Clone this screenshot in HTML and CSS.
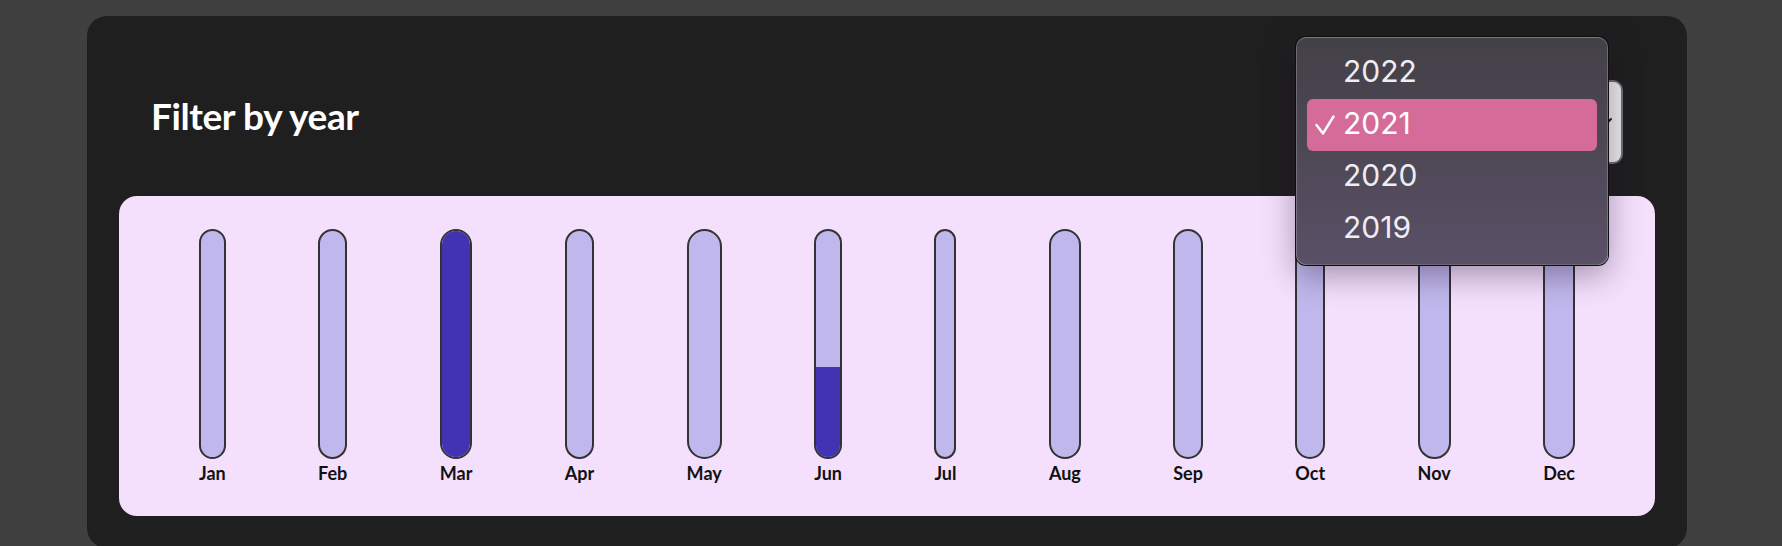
FILE: index.html
```html
<!DOCTYPE html>
<html lang="en">
<head>
<meta charset="utf-8">
<title>Filter by year</title>
<link rel="stylesheet" href="styles.css">
</head>
<body>
<div class="card">
  <div class="header">
    <h2 class="title">Filter by year</h2>
    <div class="select-wrap">
      <div class="select">
        <span class="select-value">2021</span>
        <svg class="chevron" width="16" height="10" viewBox="0 0 16 10"><polyline points="2,2 8,8 14,2" fill="none" stroke="#1a1a1a" stroke-width="2" stroke-linecap="round" stroke-linejoin="round"/></svg>
      </div>
      <div class="popup">
        <div class="option">2022</div>
        <div class="option selected">
          <svg class="check" width="20" height="20" viewBox="0 0 20 20"><polyline points="1.5,10 8,18.5 18.5,1.5" fill="none" stroke="#fff" stroke-width="2.4" stroke-linecap="round" stroke-linejoin="round"/></svg>
          2021
        </div>
        <div class="option">2020</div>
        <div class="option">2019</div>
      </div>
    </div>
  </div>
  <div class="panel">
    <div class="month"><div class="bar"><div class="fill" style="height:0%"></div></div><span class="label">Jan</span></div>
    <div class="month"><div class="bar"><div class="fill" style="height:0%"></div></div><span class="label">Feb</span></div>
    <div class="month"><div class="bar"><div class="fill" style="height:100%"></div></div><span class="label">Mar</span></div>
    <div class="month"><div class="bar"><div class="fill" style="height:0%"></div></div><span class="label">Apr</span></div>
    <div class="month"><div class="bar"><div class="fill" style="height:0%"></div></div><span class="label">May</span></div>
    <div class="month"><div class="bar"><div class="fill" style="height:40%"></div></div><span class="label">Jun</span></div>
    <div class="month"><div class="bar"><div class="fill" style="height:0%"></div></div><span class="label">Jul</span></div>
    <div class="month"><div class="bar"><div class="fill" style="height:0%"></div></div><span class="label">Aug</span></div>
    <div class="month"><div class="bar"><div class="fill" style="height:0%"></div></div><span class="label">Sep</span></div>
    <div class="month"><div class="bar"><div class="fill" style="height:0%"></div></div><span class="label">Oct</span></div>
    <div class="month"><div class="bar"><div class="fill" style="height:0%"></div></div><span class="label">Nov</span></div>
    <div class="month"><div class="bar"><div class="fill" style="height:0%"></div></div><span class="label">Dec</span></div>
  </div>
</div>
</body>
</html>
```
FILE: styles.css
```css
html, body {
  margin: 0;
  padding: 0;
  background: #404040;
  overflow: hidden;
}

body {
  padding-top: 16px;
  font-family: "Lato", "Noto Sans", sans-serif;
}

.card {
  margin-left: 87px;
  width: 1600px;
  box-sizing: border-box;
  background: #1f1f1f;
  border-radius: 20px;
  padding: 32px;
}

.header {
  display: flex;
  align-items: center;
  justify-content: space-between;
  padding: 32px 32px;
}

.title {
  margin: 0;
  padding-bottom: 14px;
  color: #ffffff;
  font-family: "Lato", sans-serif;
  font-weight: 700;
  font-size: 37px;
  letter-spacing: -0.4px;
}

.select-wrap {
  position: relative;
  width: 310px;
}

.select {
  height: 84px;
  box-sizing: border-box;
  background: #ebebeb;
  border: 2px solid #707070;
  border-radius: 10px;
  display: flex;
  align-items: center;
  justify-content: space-between;
  padding: 0 8px 0 30px;
  font-family: "Inter", sans-serif;
  font-size: 30px;
  color: #111;
}

.chevron {
  display: block;
}

.popup {
  position: absolute;
  left: -17px;
  top: -43px;
  width: 312px;
  box-sizing: border-box;
  padding: 9px 0 9px;
  border-radius: 10px;
  background: linear-gradient(180deg, #434148 0%, #4d4753 45%, #5a5067 100%);
  border: 1px solid rgba(255, 255, 255, 0.22);
  box-shadow: 0 0 0 1px #0e0e0e, 0 10px 32px rgba(30, 10, 45, 0.38);
  font-family: "Inter", sans-serif;
  font-size: 30px;
  color: #efedf1;
}

.option {
  position: relative;
  height: 52px;
  margin: 0 10px;
  padding: 0 0 5px 36px;
  box-sizing: border-box;
  display: flex;
  align-items: center;
  border-radius: 6px;
}

.option.selected {
  background: #d56b98;
  color: #ffffff;
}

.check {
  position: absolute;
  left: 8px;
  top: 16px;
}

.panel {
  display: flex;
  justify-content: space-between;
  background: #f4e0fc;
  border-radius: 18px;
  padding: 33px 80px 32px;
}

.month {
  display: flex;
  flex-direction: column;
  align-items: stretch;
}

.bar {
  height: 230px;
  box-sizing: border-box;
  border: 2px solid #333333;
  border-radius: 999px;
  background: #c0b8ec;
  overflow: hidden;
  display: flex;
  flex-direction: column;
  justify-content: flex-end;
}

.fill {
  background: #4133b1;
}

.label {
  margin-top: 3px;
  font-family: "Lato", sans-serif;
  font-weight: 700;
  font-size: 18px;
  line-height: 22px;
  color: #111111;
  text-align: center;
}
```
